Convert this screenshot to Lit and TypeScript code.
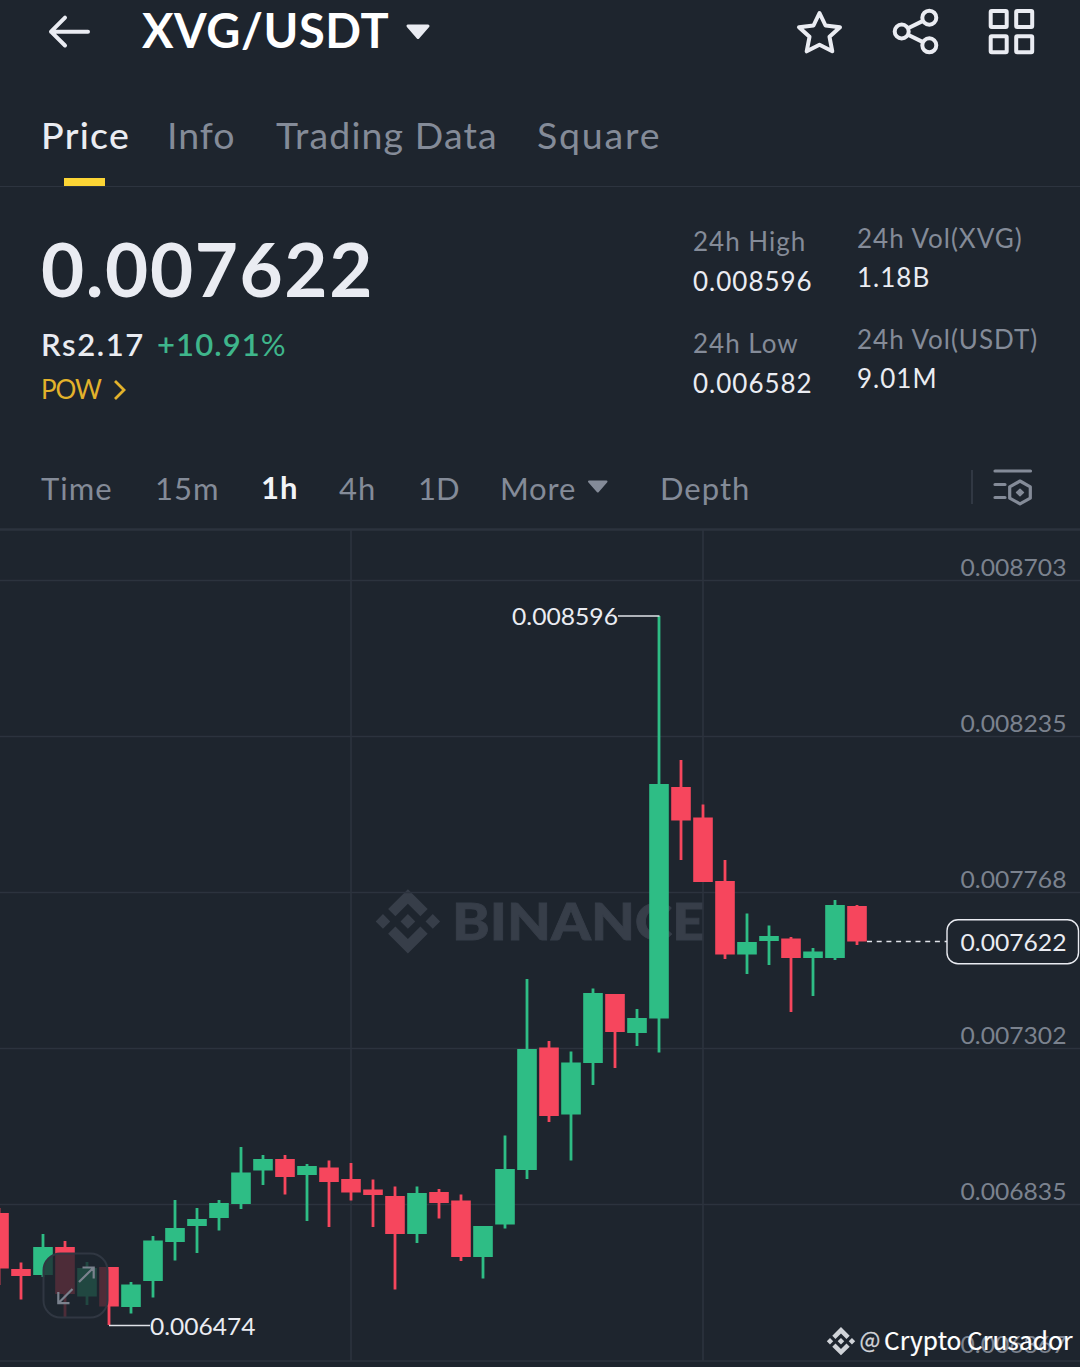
import { LitElement, html, svg, css } from "lit";
import { customElement } from "lit/decorators.js";
import { classMap } from "lit/directives/class-map.js";

type Candle = [x: number, high: number, top: number, bottom: number, low: number, up: 0 | 1];

const CANDLES: Candle[] = [
  [-1, 1208, 1213, 1268.5, 1285, 0],
  [21, 1262.5, 1269, 1276, 1299.5, 0],
  [43, 1234, 1247, 1275, 1277, 1],
  [65, 1241, 1247, 1294, 1318, 0],
  [87, 1262, 1268, 1296.5, 1305, 1],
  [109, 1267, 1267, 1306.5, 1325, 0],
  [131, 1282, 1284.5, 1307, 1313.5, 1],
  [153, 1236, 1240.5, 1281, 1297.5, 1],
  [175, 1200, 1228, 1242, 1260.5, 1],
  [197, 1208, 1219, 1226, 1253, 1],
  [219, 1200, 1203, 1218, 1230.5, 1],
  [241, 1147, 1172.5, 1204, 1209, 1],
  [263, 1155, 1159, 1170.5, 1185, 1],
  [285, 1155, 1159, 1177, 1194.5, 0],
  [307, 1164, 1166, 1175, 1221, 1],
  [329, 1160.5, 1167.5, 1182, 1227, 0],
  [351, 1163, 1179, 1192.5, 1200.5, 0],
  [373, 1179.5, 1189.5, 1195, 1227, 0],
  [395, 1186.5, 1196, 1234, 1289.5, 0],
  [417, 1186.5, 1193, 1234, 1243, 1],
  [439, 1189, 1192, 1203, 1218.5, 0],
  [461, 1194.5, 1200.5, 1257, 1261, 0],
  [483, 1226, 1226, 1257, 1278.5, 1],
  [505, 1135.5, 1169, 1224.5, 1228.5, 1],
  [527, 979, 1049, 1170, 1179, 1],
  [549, 1041, 1047.5, 1116, 1122, 0],
  [571, 1051.5, 1062.5, 1114.5, 1160.5, 1],
  [593, 988.5, 993, 1063, 1085, 1],
  [615, 994, 994, 1032, 1068, 0],
  [637, 1009, 1018, 1033, 1046, 1],
  [659, 616, 784, 1018.5, 1052.5, 1],
  [681, 760, 787, 820.5, 860, 0],
  [703, 804.5, 817.5, 882, 882, 0],
  [725, 860, 881, 954.5, 959, 0],
  [747, 913.5, 942, 954.5, 974, 1],
  [769, 925.5, 936, 941, 965, 1],
  [791, 937, 938.5, 958, 1012, 0],
  [813, 948, 951.5, 958, 996, 1],
  [835, 900, 905, 958, 960, 1],
  [857, 905, 906, 941.5, 945, 0],
];

const AXIS: [label: string, line: number, baseline: number][] = [
  ["0.008703", 580.5, 575.5],
  ["0.008235", 736.5, 731.5],
  ["0.007768", 892.5, 887.5],
  ["0.007302", 1048.5, 1043.5],
  ["0.006835", 1204.5, 1199.5],
  ["0.006367", 1361, 1353],
];

const LOGO =
  "M38.73 53.2l24.59-24.58 24.6 24.6 14.3-14.31L63.32 0 24.42 38.9zM0 63.31L14.3 49l14.31 14.31-14.31 14.3zM38.73 73.41L63.32 98l24.6-24.6 14.31 14.29-38.91 38.91-38.91-38.88zM98 63.31l14.3-14.31 14.31 14.3-14.31 14.32zM77.83 63.3L63.32 48.78 52.59 59.51 48.81 63.28l14.51 14.5 14.51-14.47z";

@customElement("app-root")
class AppRoot extends LitElement {
  static styles = css`
    :host {
      display: block;
      height: 1367px;
      overflow: hidden;
      background: #1e252e;
      color: #eaecf2;
      font-family: Lato, "Liberation Sans", sans-serif;
      white-space: nowrap;
    }
    svg { display: block; flex: none; }
    .header { display: flex; height: 64px; padding: 0 44px 0 48px; box-sizing: border-box; }
    .back { margin: 14px 51px 0 0; }
    .pair { font-size: 47px; line-height: 61px; font-weight: 700; letter-spacing: 0.6px; color: #fff; }
    .caret { margin: 23px 0 0 16px; }
    .actions { display: flex; gap: 48px; margin: 8px 0 0 auto; }

    .tabs {
      display: grid;
      grid-template-columns: 126px 109px 261px auto;
      height: 123px;
      box-sizing: border-box;
      padding: 48px 0 0 41px;
      border-bottom: 1px solid #2d343f;
      font-size: 37.5px;
      line-height: 45px;
      color: #848b98;
    }
    .tab.info { letter-spacing: 1px; }
    .tab.data { letter-spacing: 1.1px; }
    .tab.square { letter-spacing: 1.8px; }
    .tab.active { color: #eaecf2; font-weight: 500; letter-spacing: 1.3px; }
    .tab.active::after { content: ""; display: block; width: 41px; height: 8px; margin: 21px 0 0 23px; background: #fcd535; }

    .quote { display: flex; height: 268px; box-sizing: border-box; padding: 37px 0 0 41px; }
    .main { width: 652px; }
    .price { font-size: 74.5px; line-height: 89px; font-weight: 700; letter-spacing: 1.6px; }
    .change { display: flex; margin: 12px 0 10px; font-size: 31px; line-height: 38px; font-weight: 600; }
    .fiat { width: 117px; letter-spacing: 1.6px; }
    .delta { color: #3fb68b; letter-spacing: 1.1px; margin-left: -1px; }
    .percent { font-weight: 400; }
    .tag { display: flex; align-items: center; gap: 13px; font-size: 26px; line-height: 33px; letter-spacing: -1.1px; color: #e3b22b; }
    .stats { width: 164px; padding-top: 1px; font-size: 26px; line-height: 32px; letter-spacing: 1px; }
    .stats.volume { margin-top: -3px; }
    .label { color: #848b98; }
    .value { margin: 8px 0 30px; }
    .volume .value { margin-top: 7px; }

    .intervals {
      display: grid;
      grid-template-columns: 114px 106px 78px 79px 82px 160px 311px auto;
      height: 73px;
      box-sizing: border-box;
      padding: 14px 0 0 41px;
      font-size: 31px;
      line-height: 38px;
      letter-spacing: 1px;
      color: #848b98;
    }
    .active-interval { color: #f2f4f8; font-weight: 700; margin-top: -1px; letter-spacing: 1px; }
    .day { letter-spacing: 0; }
    .more { display: flex; gap: 11px; letter-spacing: 0.8px; }
    .more svg { margin-top: 11px; }
    .settings { display: flex; gap: 20px; margin-top: -1px; }
    .divider { width: 2px; height: 34px; margin-top: 2px; background: #313843; }

    .grid { stroke: #2c333e; stroke-width: 1.6; }
    .up { fill: #2ebd85; }
    .down { fill: #f6465d; }
    .axis { font-size: 23px; fill: #7b828e; }
    .bright { font-size: 23px; fill: #eaecf2; }
    .brand { font-size: 51px; font-weight: 900; fill: #373e49; stroke: #373e49; stroke-width: 0.8; }
    .mark { fill: #373e49; }
    .pointer { stroke: #dfe2e8; stroke-width: 1.6; fill: none; }
    .credit { font: 400 24.5px "Noto Sans CJK SC", sans-serif; fill: #fff; stroke: #fff; stroke-width: 0.2; }
    .at { font: 400 22px "Noto Sans CJK SC", sans-serif; fill: #d0d3d8; stroke: #d0d3d8; stroke-width: 0.3; }
    .credit-mark { fill: #d0d3d8; }
  `;

  private header() {
    return html`<div class="header">
      <svg class="back" width="43" height="36" viewBox="48 14 43 36" fill="none" stroke="#eaecf2" stroke-width="4" stroke-linecap="round" stroke-linejoin="round">
        <path d="M88 31.7H51M65 17.700L51 31.700L65 45.500" />
      </svg>
      <div class="pair">XVG/USDT</div>
      <svg class="caret" width="26" height="18" viewBox="0 0 26 18">
        <path d="M3 3H23L13 14.500Z" fill="#eaecf2" stroke="#eaecf2" stroke-width="3" stroke-linejoin="round" />
      </svg>
      <div class="actions">
        <svg width="48" height="48" viewBox="796 8 48 48" fill="none" stroke="#eaecf2" stroke-width="4" stroke-linejoin="round">
          <path d="M819.5 13L825.5 25.500L840 27.200L829.500 36.800L832.300 51.300L819.500 44.800L806.700 51.300L809.500 36.800L799 27.200L813.500 25.500Z" />
        </svg>
        <svg width="48" height="48" viewBox="892 8 48 48" fill="none" stroke="#eaecf2" stroke-width="4">
          <circle cx="901.7" cy="31.500" r="7" /><circle cx="929.3" cy="17.700" r="7" /><circle cx="929.3" cy="45.300" r="7" />
          <path d="M908 28.300L923 20.900M908 34.700L923 42.100" />
        </svg>
        <svg width="48" height="48" viewBox="988 8 48 48" fill="none" stroke="#eaecf2" stroke-width="4">
          <rect x="990.700" y="11" width="16" height="16" rx="1" /><rect x="1016.200" y="11" width="16" height="16" rx="1" />
          <rect x="990.700" y="36.300" width="16" height="16" rx="1" /><rect x="1016.200" y="36.300" width="16" height="16" rx="1" />
        </svg>
      </div>
    </div>`;
  }

  private tabs() {
    const tabs = [["Price", "active"], ["Info", "info"], ["Trading Data", "data"], ["Square", "square"]];
    return html`<div class="tabs">
      ${tabs.map(([name, kind]) => html`<div class=${classMap({ tab: true, [kind]: true })}>${name}</div>`)}
    </div>`;
  }

  private quote() {
    const stat = (label: string, value: string) =>
      html`<div class="label">${label}</div><div class="value">${value}</div>`;
    return html`<div class="quote">
      <div class="main">
        <div class="price">0.007622</div>
        <div class="change">
          <div class="fiat">Rs2.17</div>
          <div class="delta">+10.91<span class="percent">%</span></div>
        </div>
        <div class="tag">POW
          <svg width="14" height="22" viewBox="0 0 14 22" fill="none" stroke="#e3b22b" stroke-width="2.800"><path d="M1 2L10 11L1 20" /></svg>
        </div>
      </div>
      <div class="stats">${stat("24h High", "0.008596")}${stat("24h Low", "0.006582")}</div>
      <div class="stats volume">${stat("24h Vol(XVG)", "1.18B")}${stat("24h Vol(USDT)", "9.01M")}</div>
    </div>`;
  }

  private intervals() {
    return html`<div class="intervals">
      <div>Time</div>
      <div>15m</div>
      <div class="active-interval">1h</div>
      <div>4h</div>
      <div class="day">1D</div>
      <div class="more">More
        <svg width="22" height="14" viewBox="0 0 22 14"><path d="M2 1.500H19.500L10.800 11.500Z" fill="#848b98" stroke="#848b98" stroke-width="2" stroke-linejoin="round" /></svg>
      </div>
      <div>Depth</div>
      <div class="settings">
        <div class="divider"></div>
        <svg width="40" height="38" viewBox="992 467.500 40 38" fill="none" stroke="#848b98" stroke-width="3.200" stroke-linecap="round" stroke-linejoin="round">
          <path d="M994 470.500H1029.500M994 484H1004M994 497H1004" />
          <path d="M1019 480.500L1029.300 486.400V497.700L1019 503.300L1008.700 497.700V486.400Z" />
          <path d="M1019 488.700L1022.400 492L1019 495.300L1015.600 492Z" fill="#848b98" stroke-width="1.500" />
        </svg>
      </div>
    </div>`;
  }

  private chart() {
    return html`<svg width="1080" height="839" viewBox="0 528 1080 839">
      <g class="mark" transform="translate(375.700 889.200) scale(0.5085)"><path d=${LOGO} /></g>
      <text class="brand" x="452" y="940" textLength="253" lengthAdjust="spacingAndGlyphs">BINANCE</text>
      <g class="grid">
        <path d="M0 529.500H1080" stroke-width="2.400" />
        ${AXIS.map(([, y]) => svg`<path d="M0 ${y}H1080" />`)}
        <path d="M351 530V1361M703 530V1361" />
      </g>
      ${CANDLES.map(([x, high, top, bottom, low, up]) => svg`<g class=${up ? "up" : "down"}>
        <rect x=${x - 1.4} y=${high} width="2.800" height=${low - high} />
        <rect x=${x - 9.8} y=${top} width="19.600" height=${bottom - top} />
      </g>`)}
      ${AXIS.map(([label, , y]) => svg`<text class="axis" x="960.500" y=${y} textLength="106" lengthAdjust="spacingAndGlyphs">${label}</text>`)}

      <path class="pointer" d="M618 616H659.500M109 1325.500H150" />
      <text class="bright" x="512" y="624.500" textLength="106" lengthAdjust="spacingAndGlyphs">0.008596</text>
      <text class="bright" x="150" y="1334.500" textLength="105.500" lengthAdjust="spacingAndGlyphs">0.006474</text>

      <path class="pointer" d="M867 941.500H947" stroke-dasharray="5 4.700" />
      <rect x="947" y="919.700" width="131.500" height="44" rx="11" fill="#1e252e" stroke="#eaecf2" stroke-width="1.400" />
      <text class="bright" x="960.500" y="950.500" textLength="106" lengthAdjust="spacingAndGlyphs">0.007622</text>

      <rect x="43.500" y="1253.500" width="64" height="64" rx="17" fill="#1e252e" fill-opacity="0.78" stroke="#303742" stroke-width="2" />
      <path d="M79 1282L93.500 1267.700M82.500 1267.500H93.700V1278.500M72.500 1289L58.500 1303M58.300 1292V1303.200H69.500" fill="none" stroke="#7b828e" stroke-width="2.200" />

      <g class="credit-mark" transform="translate(826.800 1327) scale(0.224)"><path d=${LOGO} /></g>
      <text class="at" x="859.500" y="1348">@</text>
      <text class="credit" x="884" y="1350" textLength="188.500">Crypto Crusador</text>
    </svg>`;
  }

  render() {
    return html`${this.header()}${this.tabs()}${this.quote()}${this.intervals()}${this.chart()}`;
  }
}
